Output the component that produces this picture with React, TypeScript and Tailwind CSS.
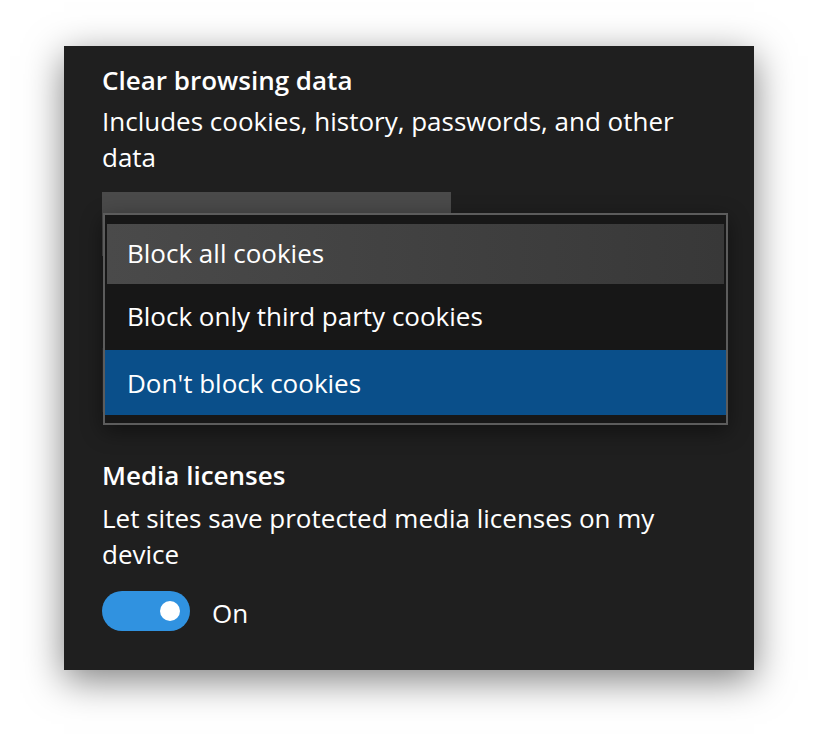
import React from "react"

const options = [
  { label: "Block all cookies", state: "hover" },
  { label: "Block only third party cookies", state: "idle" },
  { label: "Don't block cookies", state: "selected" },
]

function Toggle() {
  return (
    <div className="flex h-[40px] w-[88px] shrink-0 items-center justify-end rounded-full bg-[#3092e0] pr-[10px]">
      <div className="size-[20px] rounded-full bg-white" />
    </div>
  )
}

export default function App() {
  return (
    <div
      className="min-h-[741px] bg-white pl-[64px] pt-[46px]"
      style={{ fontFamily: '"Open Sans", "Noto Sans", sans-serif' }}
    >
      <div className="relative h-[624px] w-[690px] bg-[#1f1f1f] pl-[38px] pr-[40px] pt-[16px] text-[26px] leading-[36px] text-white shadow-[0_10px_36px_rgba(0,0,0,0.5)]">
        {/* Clear browsing data */}
        <h2 className="font-semibold">Clear browsing data</h2>
        <p className="mt-[5px] w-[600px]">
          Includes cookies, history, passwords, and other data
        </p>
        <button className="mt-[17px] block h-[64px] w-[349px] bg-[#4a4a4a]" />

        {/* Cookies select (covered by the open list) */}
        <div className="mt-[92px] h-[64px] w-[349px] bg-[#2b2b2b]" />

        {/* Media licenses */}
        <h2 className="mt-[45px] font-semibold">Media licenses</h2>
        <p className="mt-[7px] w-[600px]">
          Let sites save protected media licenses on my device
        </p>
        <div className="mt-[19px] flex items-center gap-[22px]">
          <Toggle />
          <span className="pt-[4px]">On</span>
        </div>

        {/* Open dropdown list */}
        <div className="absolute left-[39px] top-[167px] w-[625px] border-2 border-[#5c5c5c] bg-[#171717] pb-[8px] pt-[5px] shadow-[0_6px_20px_rgba(0,0,0,0.45)]">
          {options.map((o) =>
            o.state === "hover" ? (
              <div key={o.label} className="h-[64px] px-[2px] pt-[4px]">
                <div className="flex h-[60px] items-center bg-gradient-to-r from-[#4a4a4a] via-[#414141] to-[#383838] pb-[3px] pl-[20px]">
                  {o.label}
                </div>
              </div>
            ) : (
              <div
                key={o.label}
                className={
                  o.state === "selected"
                    ? "flex h-[65px] items-center bg-[#0a4f8a] pl-[22px]"
                    : "flex h-[66px] items-center pb-[2px] pl-[22px]"
                }
              >
                {o.label}
              </div>
            )
          )}
        </div>
      </div>
    </div>
  )
}
